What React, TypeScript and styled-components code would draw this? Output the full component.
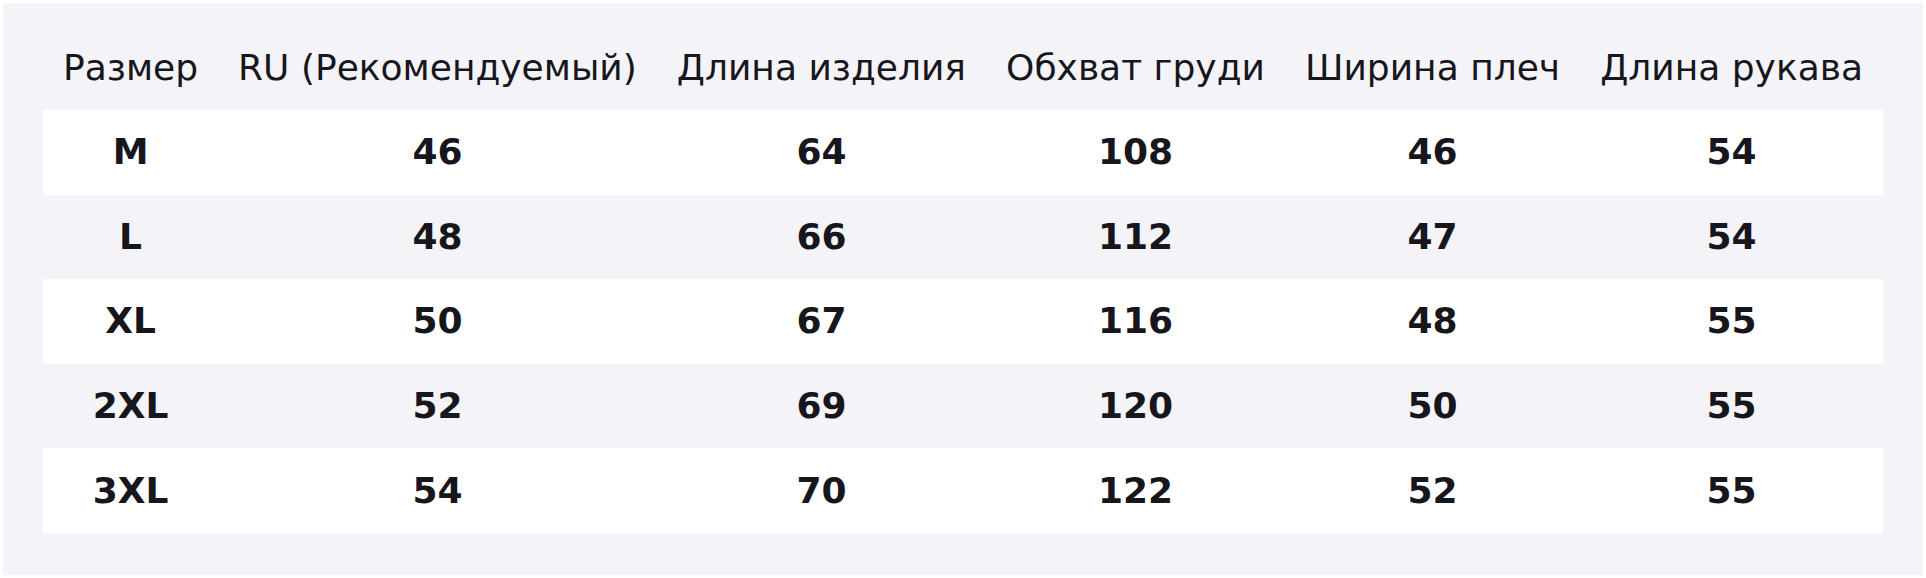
import React from 'react';
import styled, { createGlobalStyle } from 'styled-components';

const GlobalStyle = createGlobalStyle`
  html, body {
    margin: 0;
    background: #ffffff;
  }

  body {
    padding: 3px;
    font-family: 'DejaVu Sans', 'Noto Sans', sans-serif;
  }
`;

const headers = [
  'Размер',
  'RU (Рекомендуемый)',
  'Длина изделия',
  'Обхват груди',
  'Ширина плеч',
  'Длина рукава',
];

const rows = [
  ['M', '46', '64', '108', '46', '54'],
  ['L', '48', '66', '112', '47', '54'],
  ['XL', '50', '67', '116', '48', '55'],
  ['2XL', '52', '69', '120', '50', '55'],
  ['3XL', '54', '70', '122', '52', '55'],
];

const SizeChart: React.FC = () => {
  return (
    <Panel>
      <Table>
        <thead>
          <tr>
            {headers.map((h) => (
              <HeadCell key={h}>{h}</HeadCell>
            ))}
          </tr>
        </thead>
        <tbody>
          {rows.map((row, i) => (
            <Row key={row[0]} $striped={i % 2 === 0}>
              {row.map((value, j) => (
                <Cell key={j}>{value}</Cell>
              ))}
            </Row>
          ))}
        </tbody>
      </Table>
    </Panel>
  );
};

const Panel = styled.div`
  background: #f4f4f8;
  padding: 40px 40px 42px;
  height: 572px;
  box-sizing: border-box;
`;

const Table = styled.table`
  width: 100%;
  border-collapse: collapse;
  border-spacing: 0;
  color: #16161c;
`;

const HeadCell = styled.th`
  font-weight: 400;
  font-size: 36px;
  line-height: 42px;
  height: 67px;
  padding: 4px 20px 21px;
  box-sizing: border-box;
  text-align: center;
  white-space: nowrap;
`;

const Row = styled.tr<{ $striped: boolean }>`
  background: ${(p) => (p.$striped ? '#ffffff' : 'transparent')};
`;

const Cell = styled.td`
  font-weight: 700;
  font-size: 36px;
  line-height: 42px;
  height: 84.6px;
  padding: 0 20px;
  box-sizing: border-box;
  text-align: center;
  vertical-align: middle;
`;

export default function App() {
  return (
    <>
      <GlobalStyle />
      <SizeChart />
    </>
  );
}
